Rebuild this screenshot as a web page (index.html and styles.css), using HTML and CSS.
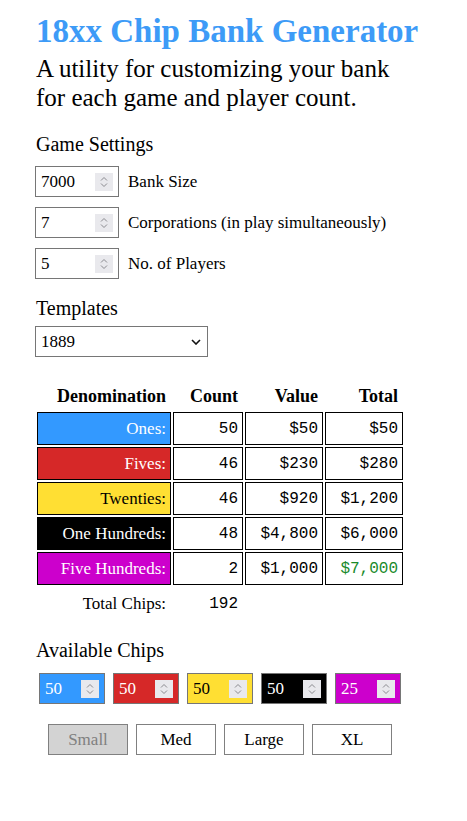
FILE: index.html
```html
<!DOCTYPE html>
<html lang="en">
<head>
<meta charset="utf-8">
<title>18xx Chip Bank Generator</title>
<link rel="stylesheet" href="styles.css">
</head>
<body>
<main class="page">
  <h1 class="title">18xx Chip Bank Generator</h1>
  <p class="subtitle">A utility for customizing your bank for each game and player count.</p>

  <h2 class="section section-game">Game Settings</h2>
  <div class="settings">
    <label class="setting">
      <span class="num num-setting"><input class="num-input" type="text" value="7000"><span class="spin"><svg viewBox="0 0 18 18" width="18" height="18"><path d="M6 7.5 9 4.5 12 7.5M6 10.5 9 13.5 12 10.5" fill="none" stroke="#8a8a8f" stroke-width="1"/></svg></span></span>
      <span class="setting-label">Bank Size</span>
    </label>
    <label class="setting">
      <span class="num num-setting"><input class="num-input" type="text" value="7"><span class="spin"><svg viewBox="0 0 18 18" width="18" height="18"><path d="M6 7.5 9 4.5 12 7.5M6 10.5 9 13.5 12 10.5" fill="none" stroke="#8a8a8f" stroke-width="1"/></svg></span></span>
      <span class="setting-label">Corporations (in play simultaneously)</span>
    </label>
    <label class="setting">
      <span class="num num-setting"><input class="num-input" type="text" value="5"><span class="spin"><svg viewBox="0 0 18 18" width="18" height="18"><path d="M6 7.5 9 4.5 12 7.5M6 10.5 9 13.5 12 10.5" fill="none" stroke="#8a8a8f" stroke-width="1"/></svg></span></span>
      <span class="setting-label">No. of Players</span>
    </label>
  </div>

  <h2 class="section section-templates">Templates</h2>
  <div class="select">
    <span class="select-value">1889</span>
    <svg class="select-arrow" viewBox="0 0 10 6" width="10" height="6"><path d="M1 1 5 5 9 1" fill="none" stroke="#111" stroke-width="1.6"/></svg>
  </div>

  <table class="bank">
    <thead>
      <tr>
        <th>Denomination</th>
        <th>Count</th>
        <th>Value</th>
        <th>Total</th>
      </tr>
    </thead>
    <tbody>
      <tr>
        <td class="denom c-blue">Ones:</td>
        <td class="mono">50</td>
        <td class="mono">$50</td>
        <td class="mono">$50</td>
      </tr>
      <tr>
        <td class="denom c-red">Fives:</td>
        <td class="mono">46</td>
        <td class="mono">$230</td>
        <td class="mono">$280</td>
      </tr>
      <tr>
        <td class="denom c-yellow">Twenties:</td>
        <td class="mono">46</td>
        <td class="mono">$920</td>
        <td class="mono">$1,200</td>
      </tr>
      <tr>
        <td class="denom c-black">One Hundreds:</td>
        <td class="mono">48</td>
        <td class="mono">$4,800</td>
        <td class="mono">$6,000</td>
      </tr>
      <tr>
        <td class="denom c-magenta">Five Hundreds:</td>
        <td class="mono">2</td>
        <td class="mono">$1,000</td>
        <td class="mono ok">$7,000</td>
      </tr>
      <tr class="totals">
        <td class="total-label">Total Chips:</td>
        <td class="mono total-count">192</td>
        <td class="blank"></td>
        <td class="blank"></td>
      </tr>
    </tbody>
  </table>

  <h2 class="section section-chips">Available Chips</h2>
  <div class="chips">
    <span class="num chip c-blue"><input class="num-input" type="text" value="50"><span class="spin"><svg viewBox="0 0 18 18" width="18" height="18"><path d="M6 7.5 9 4.5 12 7.5M6 10.5 9 13.5 12 10.5" fill="none" stroke="#8a8a8f" stroke-width="1"/></svg></span></span>
    <span class="num chip c-red"><input class="num-input" type="text" value="50"><span class="spin"><svg viewBox="0 0 18 18" width="18" height="18"><path d="M6 7.5 9 4.5 12 7.5M6 10.5 9 13.5 12 10.5" fill="none" stroke="#8a8a8f" stroke-width="1"/></svg></span></span>
    <span class="num chip c-yellow"><input class="num-input" type="text" value="50"><span class="spin"><svg viewBox="0 0 18 18" width="18" height="18"><path d="M6 7.5 9 4.5 12 7.5M6 10.5 9 13.5 12 10.5" fill="none" stroke="#8a8a8f" stroke-width="1"/></svg></span></span>
    <span class="num chip c-black"><input class="num-input" type="text" value="50"><span class="spin"><svg viewBox="0 0 18 18" width="18" height="18"><path d="M6 7.5 9 4.5 12 7.5M6 10.5 9 13.5 12 10.5" fill="none" stroke="#8a8a8f" stroke-width="1"/></svg></span></span>
    <span class="num chip c-magenta"><input class="num-input" type="text" value="25"><span class="spin"><svg viewBox="0 0 18 18" width="18" height="18"><path d="M6 7.5 9 4.5 12 7.5M6 10.5 9 13.5 12 10.5" fill="none" stroke="#8a8a8f" stroke-width="1"/></svg></span></span>
  </div>

  <div class="sizes">
    <button class="size-btn is-active" type="button">Small</button>
    <button class="size-btn" type="button">Med</button>
    <button class="size-btn" type="button">Large</button>
    <button class="size-btn" type="button">XL</button>
  </div>
</main>
</body>
</html>
```

FILE: styles.css
```css
* { box-sizing: border-box; }

html, body {
  margin: 0;
  padding: 0;
  background: #ffffff;
}

body {
  font-family: "Liberation Serif", "DejaVu Serif", serif;
  color: #000;
  font-size: 16px;
}

.page {
  padding: 13px 0 40px 35px;
  width: 467px;
}

.title {
  margin: 0;
  font-size: 33px;
  line-height: 36px;
  font-weight: bold;
  color: #3d9bf7;
  padding-left: 1px;
}

.subtitle {
  margin: 5px 0 0 0;
  padding-left: 1px;
  font-size: 25px;
  line-height: 29px;
  width: 380px;
}

.section {
  margin: 0;
  padding-left: 1px;
  font-size: 20px;
  line-height: 22px;
  font-weight: normal;
}

.section-game { margin-top: 21px; }
.section-templates { margin-top: 18px; }
.section-chips { margin-top: 17px; }

.settings {
  margin-top: 11px;
  display: flex;
  flex-direction: column;
  gap: 10px;
}

.setting {
  display: flex;
  align-items: center;
  gap: 9px;
}

.setting-label {
  font-size: 17px;
}

.num {
  display: flex;
  align-items: center;
  height: 31px;
  border: 1px solid #767676;
  background: #fff;
  padding: 0 5px 0 5px;
}

.num-setting { width: 84px; }

.num-input {
  flex: 1;
  min-width: 0;
  border: 0;
  padding: 0;
  margin: 0;
  background: transparent;
  font-family: "Liberation Serif", "DejaVu Serif", serif;
  font-size: 17px;
  color: inherit;
  outline: none;
}

.spin {
  flex: none;
  width: 18px;
  height: 18px;
  background: #e9e9ed;
  display: flex;
}

.select {
  margin-top: 7px;
  width: 173px;
  height: 31px;
  border: 1px solid #767676;
  display: flex;
  align-items: center;
  justify-content: space-between;
  padding: 0 6px 0 5px;
  font-size: 17px;
}

.select-arrow { display: block; }

.bank {
  margin-top: 27px;
  border-collapse: separate;
  border-spacing: 2px;
  font-size: 17px;
}

.bank th {
  font-weight: bold;
  font-size: 18px;
  text-align: right;
  height: 24px;
  padding: 0 5px 4px 0;
  line-height: 20px;
  vertical-align: bottom;
}

.bank th:nth-child(1) { width: 134px; }
.bank th:nth-child(2) { width: 70px; }
.bank th:nth-child(3) { width: 78px; }
.bank th:nth-child(4) { width: 78px; }

.bank td {
  height: 33px;
  border: 1px solid #000;
  text-align: right;
  padding: 0 4px 0 4px;
  vertical-align: middle;
  white-space: nowrap;
}

.bank td.mono {
  font-family: "Liberation Mono", "DejaVu Sans Mono", monospace;
  font-size: 16px;
}

.bank td.ok { color: #1a8a2a; }

.bank .totals td {
  border: 0;
}

.bank .totals .total-label { padding-right: 5px; }
.bank .totals .total-count { padding-right: 5px; }

.c-blue { background: #3399ff; color: #fff; }
.c-red { background: #d62828; color: #fff; }
.c-yellow { background: #ffdf33; color: #000; }
.c-black { background: #000; color: #fff; }
.c-magenta { background: #cc00cc; color: #fff; }

.chips {
  margin-top: 12px;
  margin-left: 4px;
  display: flex;
  gap: 8px;
}

.chip {
  width: 66px;
}

.sizes {
  margin-top: 20px;
  margin-left: 13px;
  display: flex;
  gap: 8px;
}

.size-btn {
  width: 80px;
  height: 31px;
  border: 1px solid #808080;
  background: #fff;
  font-family: "Liberation Serif", "DejaVu Serif", serif;
  font-size: 17px;
  color: #000;
  padding: 0;
  margin: 0;
}

.size-btn.is-active {
  background: #d3d3d3;
  color: #808080;
}
```
